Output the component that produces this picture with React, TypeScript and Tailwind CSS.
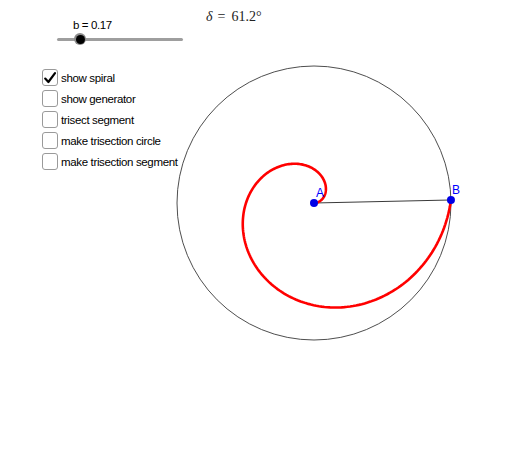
const cx = 314
const cy = 203
const R = 137
const phi0 = 0.022

function spiralPath(): string {
  const pts: string[] = []
  const n = 240
  for (let i = 0; i <= n; i++) {
    const t = (i / n) * 2 * Math.PI
    const r = (R * t) / (2 * Math.PI)
    const a = t + phi0
    const x = cx + r * Math.cos(a)
    const y = cy - r * Math.sin(a)
    pts.push(`${i === 0 ? 'M' : 'L'}${x.toFixed(2)} ${y.toFixed(2)}`)
  }
  return pts.join(' ')
}

const options = [
  { label: 'show spiral', checked: true },
  { label: 'show generator', checked: false },
  { label: 'trisect segment', checked: false },
  { label: 'make trisection circle', checked: false },
  { label: 'make trisection segment', checked: false }
]

function Checkbox({ label, checked }: { label: string; checked: boolean }) {
  return (
    <div className="flex items-center gap-[3px] h-[17px]">
      <div className="w-[16px] h-[17px] rounded-[3px] border border-[#9a9a9a] bg-white flex items-center justify-center">
        {checked && (
          <svg width="14" height="14" viewBox="0 0 14 14">
            <path d="M2.2 7.6 L5.4 11 L12 2.2" fill="none" stroke="#000" strokeWidth="2.2" strokeLinecap="round" strokeLinejoin="round" />
          </svg>
        )}
      </div>
      <span className="text-[11.5px] leading-[14px] tracking-[-0.35px] text-black">{label}</span>
    </div>
  )
}

export default function App() {
  const bx = cx + R * Math.cos(phi0)
  const by = cy - R * Math.sin(phi0)
  return (
    <div
      className="relative w-[512px] h-[459px] bg-white overflow-hidden"
      style={{ fontFamily: '"Liberation Sans", Arial, sans-serif' }}
    >
      {/* graphics view */}
      <svg className="absolute inset-0" width="512" height="459" viewBox="0 0 512 459">
        <circle cx={cx} cy={cy} r={R} fill="none" stroke="#3a3a3a" strokeWidth="0.9" />
        <line x1={cx} y1={cy} x2={bx} y2={by} stroke="#3a3a3a" strokeWidth="1" />
        <path d={spiralPath()} fill="none" stroke="#ff0000" strokeWidth="2.6" strokeLinecap="round" />
        <circle cx={cx} cy={cy} r="4" fill="#0000e6" />
        <circle cx={bx} cy={by} r="4" fill="#0000e6" />
        <text x="316" y="197" fontSize="12" fill="#0000ff" fontFamily='"Liberation Sans", Arial, sans-serif'>A</text>
        <text x="452" y="194" fontSize="12" fill="#0000ff" fontFamily='"Liberation Sans", Arial, sans-serif'>B</text>
        <text x="206" y="21" fontSize="14" fill="#222" fontFamily='"Liberation Serif", "Times New Roman", serif'>
          <tspan fontStyle="italic">δ</tspan>
          <tspan dx="5">=</tspan>
          <tspan dx="6">61.2°</tspan>
        </text>
      </svg>

      {/* controls */}
      <div className="relative flex flex-col pl-[42px] pt-[18px]">
        <div className="ml-[15px] w-[126px] flex flex-col">
          <span className="pl-[16px] text-[11.5px] leading-[14px] tracking-[-0.4px] text-black">b = 0.17</span>
          <div className="relative h-[14px] flex items-center">
            <div className="w-full h-[3px] rounded-full bg-[#9e9e9e]" />
            <div className="absolute left-[17px] top-[1px] w-[12px] h-[12px] rounded-full bg-[#8a8a8a] flex items-center justify-center">
              <div className="w-[9px] h-[9px] rounded-full bg-black" />
            </div>
          </div>
        </div>
        <div className="mt-[23px] flex flex-col gap-[4px]">
          {options.map((o) => (
            <Checkbox key={o.label} label={o.label} checked={o.checked} />
          ))}
        </div>
      </div>
    </div>
  )
}
